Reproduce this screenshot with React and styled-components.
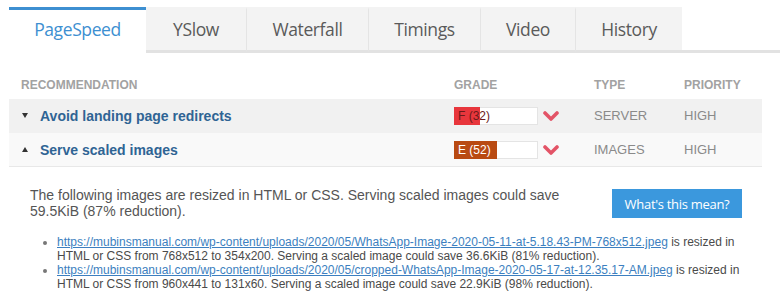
import React from "react";
import styled, { createGlobalStyle } from "styled-components";

const tabs = ["PageSpeed", "YSlow", "Waterfall", "Timings", "Video", "History"];
const tabWidths = [137, 100, 122, 112, 95, 107];

const rows = [
  { open: false, title: "Avoid landing page redirects", grade: "F (32)", score: 32, fill: "#e8363c", ink: "#6b1a1a", type: "SERVER", priority: "HIGH", bg: "#f1f1f1" },
  { open: true, title: "Serve scaled images", grade: "E (52)", score: 52, fill: "#b94a12", ink: "#ffffff", type: "IMAGES", priority: "HIGH", bg: "#f9f9f9" },
];

const images = [
  {
    url: "https://mubinsmanual.com/wp-content/uploads/2020/05/WhatsApp-Image-2020-05-11-at-5.18.43-PM-768x512.jpeg",
    rest: " is resized in HTML or CSS from 768x512 to 354x200. Serving a scaled image could save 36.6KiB (81% reduction).",
  },
  {
    url: "https://mubinsmanual.com/wp-content/uploads/2020/05/cropped-WhatsApp-Image-2020-05-17-at-12.35.17-AM.jpeg",
    rest: " is resized in HTML or CSS from 960x441 to 131x60. Serving a scaled image could save 22.9KiB (98% reduction).",
  },
];

export default function App() {
  return (
    <>
      <GlobalStyle />
      <Page>
        <TabBar>
          {tabs.map((t, i) => (
            <Tab key={t} active={i === 0} divider={i > 1} style={{ width: tabWidths[i] }}>
              {t}
            </Tab>
          ))}
          <TabFill />
        </TabBar>

        <Table>
          <HeadRow>
            <HeadCell>Recommendation</HeadCell>
            <HeadCell>Grade</HeadCell>
            <HeadCell>Type</HeadCell>
            <HeadCell>Priority</HeadCell>
          </HeadRow>
          {rows.map((r) => (
            <Row key={r.title} bg={r.bg}>
              <Title>
                <Caret open={r.open} />
                {r.title}
              </Title>
              <GradeCell>
                <GradeBox>
                  <GradeFill fill={r.fill} style={{ width: `${r.score}%` }} />
                  <GradeText ink={r.ink}>{r.grade}</GradeText>
                </GradeBox>
                <Chevron width="16" height="12" viewBox="0 0 16 12">
                  <polyline points="2,3 8,9 14,3" fill="none" stroke="#e35467" strokeWidth="3.6" strokeLinecap="round" strokeLinejoin="round" />
                </Chevron>
              </GradeCell>
              <Cell>{r.type}</Cell>
              <Cell>{r.priority}</Cell>
            </Row>
          ))}
        </Table>

        <Details>
          <Intro>
            The following images are resized in HTML or CSS. Serving scaled images could save 59.5KiB (87% reduction).
          </Intro>
          <InfoButton>What's this mean?</InfoButton>
        </Details>

        <List>
          {images.map((im) => (
            <Item key={im.url}>
              <Link href="#">{im.url}</Link>
              {im.rest}
            </Item>
          ))}
        </List>
      </Page>
    </>
  );
}

const GlobalStyle = createGlobalStyle`
  body {
    margin: 0;
    background: #ffffff;
    font-family: "Liberation Sans", Arial, sans-serif;
  }
`;

const Page = styled.div`
  width: 780px;
  height: 302px;
  overflow: hidden;
  padding-top: 7px;
  box-sizing: border-box;
`;

const TabBar = styled.div`
  display: flex;
  padding-left: 9px;
  height: 46px;
`;

const Tab = styled.div`
  box-sizing: border-box;
  height: 46px;
  display: flex;
  align-items: center;
  justify-content: center;
  padding-bottom: 2px;
  font-family: "Open Sans", sans-serif;
  font-size: 17.5px;
  letter-spacing: -0.4px;
  color: ${(p) => (p.active ? "#3d8fd1" : "#5a5a5a")};
  background: ${(p) => (p.active ? "#ffffff" : "#f3f3f3")};
  border-top: 3px solid ${(p) => (p.active ? "#3d8fd1" : "#f3f3f3")};
  border-bottom: 3px solid ${(p) => (p.active ? "#ffffff" : "#e2e2e2")};
  border-left: ${(p) => (p.divider ? "1px solid #e4e4e4" : "none")};
`;

const TabFill = styled.div`
  flex: 1;
  border-bottom: 3px solid #e2e2e2;
`;

const Table = styled.div`
  margin: 17px 18px 0 9px;
`;

const columns = `
  display: grid;
  grid-template-columns: 433px 140px 90px 1fr;
  align-items: center;
  padding-left: 12px;
`;

const HeadRow = styled.div`
  ${columns}
  height: 29px;
`;

const HeadCell = styled.div`
  font-size: 12px;
  font-weight: bold;
  text-transform: uppercase;
  color: #a2a2a2;
`;

const Row = styled.div`
  ${columns}
  height: 34px;
  background: ${(p) => p.bg};
  border-bottom: 1px solid ${(p) => (p.bg === "#f9f9f9" ? "#e8e8e8" : "transparent")};
  box-sizing: border-box;
`;

const Title = styled.div`
  display: flex;
  align-items: center;
  font-size: 14px;
  font-weight: bold;
  color: #2f6494;
`;

const Caret = styled.span`
  width: 0;
  height: 0;
  margin: 0 12px 0 1px;
  border-left: 3.5px solid transparent;
  border-right: 3.5px solid transparent;
  ${(p) => (p.open ? "border-bottom: 5px solid #333;" : "border-top: 5px solid #333;")}
`;

const GradeCell = styled.div`
  display: flex;
  align-items: center;
  gap: 4px;
`;

const GradeBox = styled.div`
  position: relative;
  width: 84px;
  height: 18px;
  box-sizing: border-box;
  background: #ffffff;
  border: 1px solid #e4e4e4;
  display: flex;
  align-items: center;
`;

const GradeFill = styled.div`
  position: absolute;
  left: -1px;
  top: -1px;
  bottom: -1px;
  background: ${(p) => p.fill};
`;

const GradeText = styled.span`
  position: relative;
  padding-left: 3px;
  font-size: 12px;
  color: ${(p) => p.ink};
`;

const Chevron = styled.svg`
  display: block;
  margin-left: 1px;
`;

const Cell = styled.div`
  font-size: 13px;
  color: #8a8a8a;
`;

const Details = styled.div`
  display: flex;
  align-items: flex-start;
  padding: 20px 38px 0 30px;
`;

const Intro = styled.p`
  margin: 0;
  width: 540px;
  font-size: 14px;
  line-height: 16px;
  color: #555555;
`;

const InfoButton = styled.button`
  margin-left: auto;
  margin-top: 2px;
  width: 130px;
  height: 29px;
  border: none;
  background: #3b98dd;
  color: #ffffff;
  font-family: "Open Sans", sans-serif;
  font-size: 13px;
  letter-spacing: -0.3px;
  cursor: pointer;
`;

const List = styled.ul`
  margin: 16px 0 0 0;
  padding-left: 57px;
  width: 692px;
  color: #4a4a4a;
  font-size: 12px;
  line-height: 14px;
`;

const Item = styled.li`
  &::marker {
    color: #777;
  }
`;

const Link = styled.a`
  color: #3c7fc0;
  text-decoration: underline;
`;
